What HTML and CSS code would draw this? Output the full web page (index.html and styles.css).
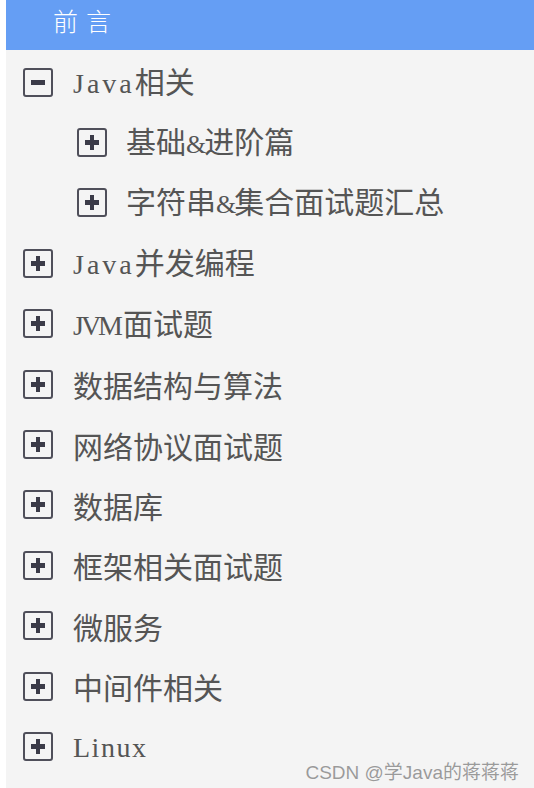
FILE: index.html
```html
<!DOCTYPE html>
<html lang="zh">
<head>
<meta charset="utf-8">
<title>目录</title>
<link rel="stylesheet" href="styles.css">
</head>
<body>
<div class="panel">
  <div class="header">前言</div>
  <ul class="tree">
    <li class="row"><span class="box minus"><i></i></span><span class="label"><span class="lat">Java</span>相关</span></li>
    <li class="row sub"><span class="box plus"><i></i><b></b></span><span class="label">基础<span class="lat amp">&amp;</span>进阶篇</span></li>
    <li class="row sub"><span class="box plus"><i></i><b></b></span><span class="label">字符串<span class="lat amp">&amp;</span>集合面试题汇总</span></li>
    <li class="row"><span class="box plus"><i></i><b></b></span><span class="label"><span class="lat">Java</span>并发编程</span></li>
    <li class="row"><span class="box plus"><i></i><b></b></span><span class="label"><span class="lat jvm">JVM</span>面试题</span></li>
    <li class="row"><span class="box plus"><i></i><b></b></span><span class="label">数据结构与算法</span></li>
    <li class="row"><span class="box plus"><i></i><b></b></span><span class="label">网络协议面试题</span></li>
    <li class="row"><span class="box plus"><i></i><b></b></span><span class="label">数据库</span></li>
    <li class="row"><span class="box plus"><i></i><b></b></span><span class="label">框架相关面试题</span></li>
    <li class="row"><span class="box plus"><i></i><b></b></span><span class="label">微服务</span></li>
    <li class="row"><span class="box plus"><i></i><b></b></span><span class="label">中间件相关</span></li>
    <li class="row"><span class="box plus"><i></i><b></b></span><span class="label"><span class="lat linux">Linux</span></span></li>
  </ul>
  <div class="watermark">CSDN @学Java的蒋蒋蒋</div>
</div>
</body>
</html>
```
FILE: styles.css
```css
html, body {
  margin: 0;
  padding: 0;
  background: #ffffff;
}
body {
  width: 534px;
  height: 788px;
  overflow: hidden;
}
.panel {
  position: relative;
  margin-left: 6px;
  height: 788px;
  background: #f4f4f4;
  font-family: "Noto Sans CJK SC", sans-serif;
}
.header {
  height: 50px;
  background: #659ef4;
  color: #ffffff;
  font-size: 25px;
  line-height: 40px;
  padding-left: 47px;
  letter-spacing: 8px;
  font-weight: 300;
}
.tree {
  list-style: none;
  margin: 0;
  padding: 2px 0 0 0;
}
.row {
  height: 60.4px;
  display: flex;
  align-items: center;
  padding-left: 17px;
}
.row.sub {
  padding-left: 71px;
}
.box {
  position: relative;
  box-sizing: border-box;
  width: 30px;
  height: 29px;
  border: 2px solid #4f4f5a;
  border-radius: 3px;
  flex: none;
  margin-right: 20px;
}
.row.sub .box {
  margin-right: 19px;
}
.box i {
  position: absolute;
  left: 6px;
  top: 10px;
  width: 14px;
  height: 5px;
  background: #3b3b48;
}
.box b {
  position: absolute;
  left: 11px;
  top: 5px;
  width: 4px;
  height: 15px;
  background: #3b3b48;
}
.label {
  font-size: 30px;
  line-height: 36px;
  color: #555555;
  white-space: nowrap;
}
.lat {
  font-family: "Liberation Serif", serif;
  font-size: 28px;
  letter-spacing: 3px;
}
.lat.amp {
  font-size: 26px;
  letter-spacing: -3px;
  padding-right: 1px;
}
.lat.jvm {
  letter-spacing: -3px;
  padding-right: 3px;
}
.lat.linux {
  letter-spacing: 1.5px;
}
.watermark {
  position: absolute;
  right: 15px;
  top: 757px;
  font-family: "Liberation Sans", "Noto Sans CJK SC", sans-serif;
  font-size: 19px;
  color: #9a9a9a;
  text-shadow: 0 0 1px #ffffff;
}
```
